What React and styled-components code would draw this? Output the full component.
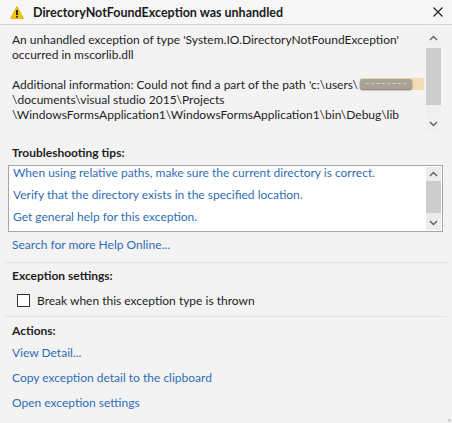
import styled, { createGlobalStyle } from 'styled-components';

const GlobalStyle = createGlobalStyle`
  html, body {
    margin: 0;
    padding: 0;
    background: #f3f3f3;
  }
  body {
    font-family: Lato, "Noto Sans", sans-serif;
    font-size: 12px;
    color: #1e1e1e;
  }
`

const Dialog = styled.div`
  width: 452px;
  height: 423px;
  background: #f3f3f3;
  display: flex;
  flex-direction: column;
  box-sizing: border-box;
  position: relative;
  overflow: hidden;
`

const TitleBar = styled.div`
  height: 25px;
  box-sizing: border-box;
  border-bottom: 1px solid #d6d6d6;
  display: flex;
  align-items: center;
  padding: 0 8px 0 10px;
  gap: 9px;
  background: #f6f6f6;
`

const Title = styled.div`
  flex: 1;
  font-weight: 700;
  font-size: 12.5px;
  color: #1a1a1a;
`

const CloseButton = styled.div`
  width: 12px;
  height: 12px;
  display: flex;
  align-items: center;
  justify-content: center;
`

const MessageArea = styled.div`
  margin-top: 3px;
  height: 105px;
  display: flex;
  padding: 0 11px 0 12px;
`

const MessageText = styled.div`
  flex: 1;
  padding-top: 4px;
  line-height: 15px;
  white-space: nowrap;
  overflow: hidden;
`

const Line = styled.div`
  height: 15px;
`

const Redacted = styled.span`
  display: inline-block;
  vertical-align: middle;
  width: 64px;
  height: 12px;
  margin: -3px 0 0 2px;
  background: #f1dcb4;
  position: relative;
`

const Smudge = styled.span`
  position: absolute;
  left: 0;
  top: 1px;
  width: 52px;
  height: 10px;
  border-radius: 3px;
  background: #a9a397;
  box-shadow: 0 1px 2px #6f695f;
  filter: blur(0.6px);
  &::after {
    content: '';
    position: absolute;
    left: 6px;
    right: 6px;
    top: 4px;
    border-top: 1px dashed #d8d2c6;
  }
`

const ScrollBar = styled.div`
  width: 15px;
  display: flex;
  flex-direction: column;
  background: ${(p) => (p.light ? '#f0f0f0' : '#ececec')};
`

const Arrow = styled.div`
  height: ${(p) => p.size}px;
  display: flex;
  align-items: center;
  justify-content: center;
`

const Track = styled.div`
  flex: 1;
  display: flex;
  flex-direction: column;
`

const Thumb = styled.div`
  margin-top: ${(p) => p.offset}px;
  height: ${(p) => p.size}px;
  background: #cdcdcd;
`

const Heading = styled.div`
  margin: ${(p) => p.top}px 0 0 12px;
  line-height: 16px;
  font-weight: 700;
`

const TipsBox = styled.div`
  margin: 4px 9px 0 8px;
  height: 67px;
  box-sizing: border-box;
  border: 1px solid #a6a6a6;
  background: #ffffff;
  display: flex;
`

const TipsList = styled.div`
  flex: 1;
  display: flex;
  flex-direction: column;
  gap: 8px;
  padding-left: 4px;
`

const Link = styled.a`
  display: block;
  color: #2f6db5;
  text-decoration: none;
  line-height: ${(p) => p.lh || 16}px;
  margin: ${(p) => p.top || 0}px 0 0 ${(p) => p.left || 0}px;
  white-space: nowrap;
  cursor: pointer;
`

const Divider = styled.div`
  margin: ${(p) => p.top}px 5px 0 4px;
  height: 1px;
  background: #e3e3e3;
`

const CheckRow = styled.label`
  margin: 8px 0 0 17px;
  height: 16px;
  display: flex;
  align-items: center;
  gap: 7px;
`

const CheckBox = styled.span`
  width: 13px;
  height: 13px;
  box-sizing: border-box;
  border: 1px solid #333333;
  background: #ffffff;
`

const ActionList = styled.div`
  display: flex;
  flex-direction: column;
  gap: 9px;
  margin: 6px 0 0 12px;
`

const Grip = styled.div`
  position: absolute;
  right: 1px;
  bottom: 1px;
  width: 3px;
  height: 3px;
  background: #d0d0d0;
`

function WarningIcon() {
  return (
    <svg width="14" height="13" viewBox="0 0 14 13">
      <path d="M7 0.6 L13.5 12.4 L0.5 12.4 Z" fill="#f6c700" stroke="#e0a800" strokeWidth="0.8" strokeLinejoin="round" />
      <rect x="6.1" y="4" width="1.8" height="5" fill="#1a1a1a" />
      <rect x="6.1" y="9.9" width="1.8" height="1.6" fill="#1a1a1a" />
    </svg>
  )
}

function CloseIcon() {
  return (
    <svg width="10" height="10" viewBox="0 0 10 10">
      <path d="M0.5 0.5 L9.5 9.5 M9.5 0.5 L0.5 9.5" stroke="#222" strokeWidth="1.2" />
    </svg>
  )
}

function Chevron({ down }) {
  return (
    <svg width="9" height="6" viewBox="0 0 9 6">
      <path d={down ? 'M1 1 L4.5 4.5 L8 1' : 'M1 5 L4.5 1.5 L8 5'} fill="none" stroke="#606060" strokeWidth="1.4" />
    </svg>
  )
}

function App() {
  return (
    <>
      <GlobalStyle />
      <Dialog>
        <TitleBar>
          <WarningIcon />
          <Title>DirectoryNotFoundException was unhandled</Title>
          <CloseButton><CloseIcon /></CloseButton>
        </TitleBar>

        <MessageArea>
          <MessageText>
            <Line>An unhandled exception of type 'System.IO.DirectoryNotFoundException'</Line>
            <Line>occurred in mscorlib.dll</Line>
            <Line />
            <Line>Additional information: Could not find a part of the path 'c:\users\<Redacted><Smudge /></Redacted></Line>
            <Line>\documents\visual studio 2015\Projects</Line>
            <Line>\WindowsFormsApplication1\WindowsFormsApplication1\bin\Debug\lib</Line>
          </MessageText>
          <ScrollBar light>
            <Arrow size={19}><Chevron /></Arrow>
            <Track>
              <Thumb offset={1} size={57} />
            </Track>
            <Arrow size={19}><Chevron down /></Arrow>
          </ScrollBar>
        </MessageArea>

        <Heading top={12}>Troubleshooting tips:</Heading>
        <TipsBox>
          <TipsList>
            <Link lh={14}>When using relative paths, make sure the current directory is correct.</Link>
            <Link lh={14}>Verify that the directory exists in the specified location.</Link>
            <Link lh={14}>Get general help for this exception.</Link>
          </TipsList>
          <ScrollBar style={{ margin: '1px 1px 1px 0' }}>
            <Arrow size={14}><Chevron /></Arrow>
            <Track>
              <Thumb offset={0} size={32} />
            </Track>
            <Arrow size={15}><Chevron down /></Arrow>
          </ScrollBar>
        </TipsBox>
        <Link top={5} left={12}>Search for more Help Online...</Link>

        <Divider top={9} />
        <Heading top={5}>Exception settings:</Heading>
        <CheckRow>
          <CheckBox />
          <span>Break when this exception type is thrown</span>
        </CheckRow>

        <Divider top={8} />
        <Heading top={6}>Actions:</Heading>
        <ActionList>
          <Link>View Detail...</Link>
          <Link>Copy exception detail to the clipboard</Link>
          <Link>Open exception settings</Link>
        </ActionList>
        <Grip />
      </Dialog>
    </>
  )
}

export default App
